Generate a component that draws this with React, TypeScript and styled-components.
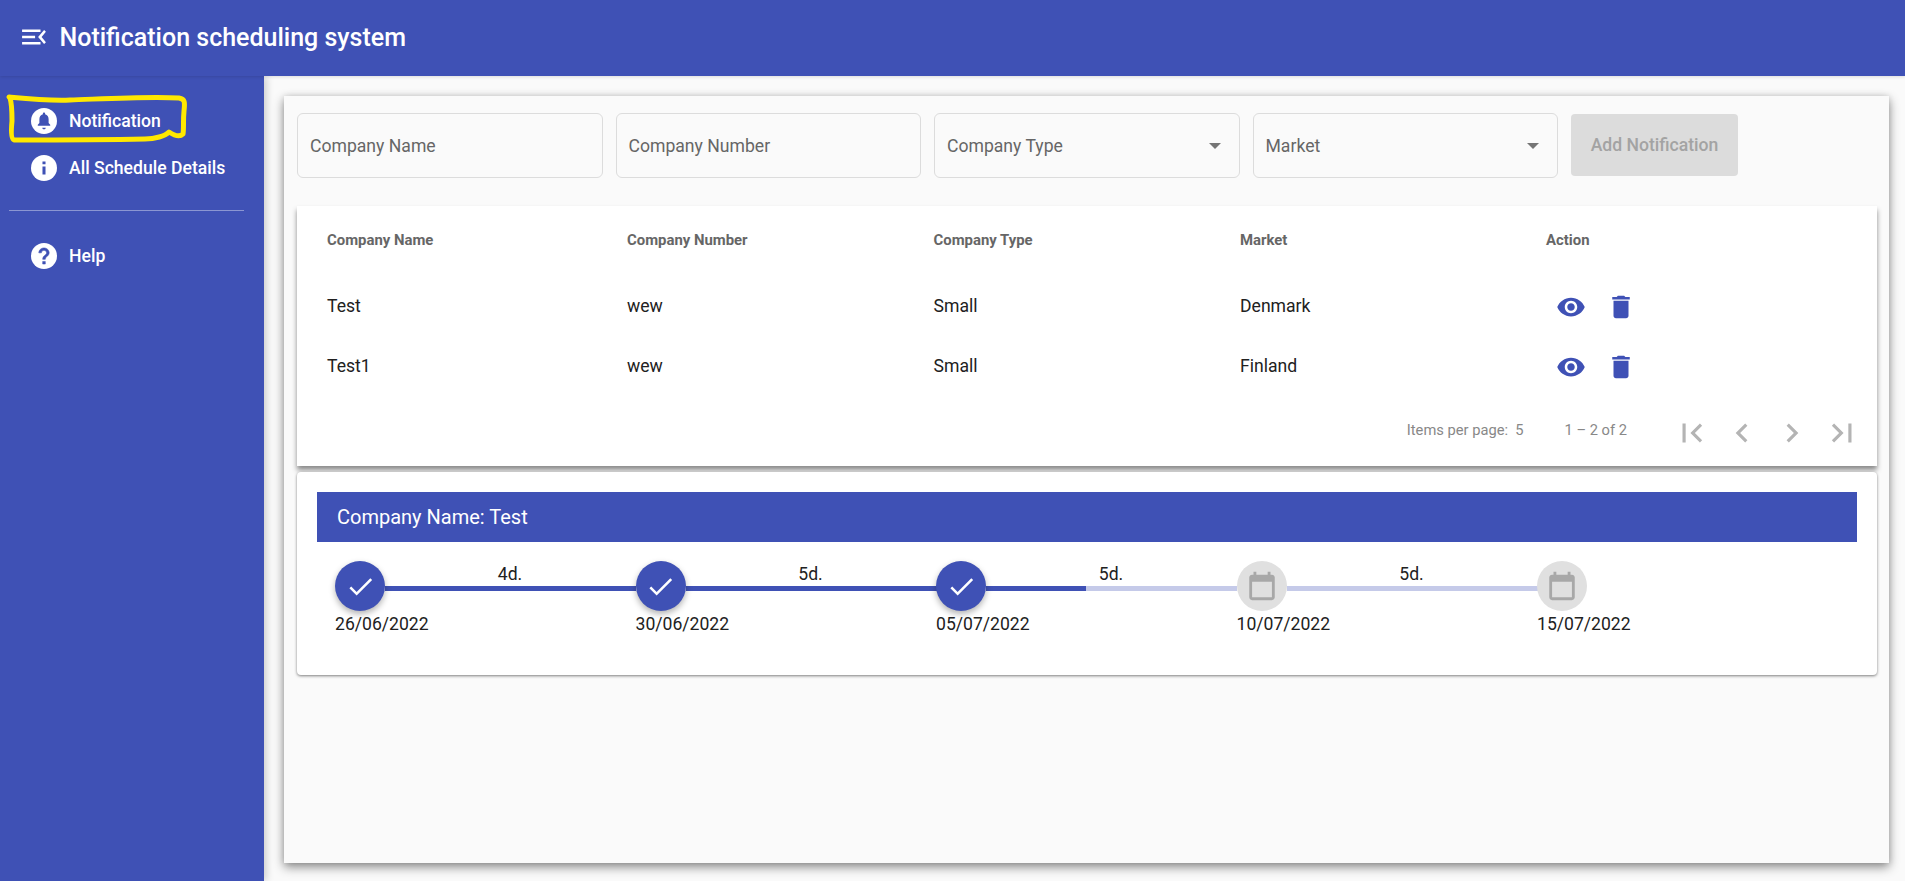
import React from "react";
import styled, { createGlobalStyle } from "styled-components";

const indigo = "#3f51b5";

const Global = createGlobalStyle`
  html, body { margin: 0; padding: 0; height: 100%; }
  body { font-family: Roboto, "Liberation Sans", sans-serif; background: #fafafa; overflow: hidden; }
  * { box-sizing: border-box; }
`;

const Page = styled.div`
  width: 1905px;
  height: 881px;
  display: flex;
  flex-direction: column;
  overflow: hidden;
`;

const Header = styled.header`
  position: relative;
  z-index: 2;
  height: 76px;
  flex: none;
  background: ${indigo};
  color: #fff;
  display: flex;
  align-items: center;
  padding: 0 0 2px 21px;
  gap: 12.500px;
  box-shadow: 0 1px 3px rgba(0, 0, 0, 0.12);
`;

const MenuIcon = styled.svg`
  width: 26px;
  height: 26px;
  fill: #fff;
  flex: none;
`;

const Title = styled.h1`
  margin: 0;
  font-size: 25px;
  font-weight: 500;
`;

const Body = styled.div`
  flex: 1;
  display: flex;
  min-height: 0;
`;

const Sidebar = styled.nav`
  position: relative;
  width: 264px;
  flex: none;
  background: ${indigo};
  padding-top: 21px;
  box-shadow: 2px 0 8px rgba(0, 0, 0, 0.2);
`;

const NavItem = styled.div`
  height: 47px;
  display: flex;
  align-items: center;
  gap: 12px;
  padding-left: 31px;
  color: #fff;
  font-size: 17.6px;
  font-weight: 500;
`;

const NavIcon = styled.svg`
  width: 26px;
  height: 26px;
  flex: none;
`;

const Divider = styled.hr`
  margin: 19px 20px 21px 9px;
  border: 0;
  height: 1px;
  background: rgba(255, 255, 255, 0.4);
`;

const Highlight = styled.svg`
  position: absolute;
  left: 0;
  top: 0;
  width: 264px;
  height: 100px;
  pointer-events: none;
`;

const Main = styled.main`
  flex: 1;
  padding: 20px 16px 18px 20px;
  min-width: 0;
`;

const Sheet = styled.section`
  height: 767px;
  background: #fafafa;
  box-shadow: 0 4px 10px rgba(0, 0, 0, 0.45), 0 0 6px rgba(0, 0, 0, 0.1);
  padding: 17px 12px 0 13px;
`;

const Filters = styled.div`
  display: flex;
  align-items: center;
  gap: 13px;
`;

const Field = styled.div`
  width: 305.5px;
  height: 65px;
  border: 1px solid #dcdcdc;
  border-radius: 6px;
  padding: 0 12px;
  display: flex;
  align-items: center;
  justify-content: space-between;
  color: #666;
  font-size: 17.6px;
`;

const Caret = styled.span`
  width: 0;
  height: 0;
  margin-right: 6px;
  border-left: 6px solid transparent;
  border-right: 6px solid transparent;
  border-top: 6px solid #757575;
`;

const AddButton = styled.button`
  width: 167px;
  height: 62px;
  margin-bottom: 2px;
  border: 0;
  border-radius: 4px;
  background: #dcdcdc;
  color: #a3a3a3;
  font: 500 17.6px Roboto, sans-serif;
`;

const TableCard = styled.div`
  margin-top: 28px;
  height: 260px;
  width: 1580px;
  background: #fff;
  box-shadow: 0 4px 5px rgba(0, 0, 0, 0.45);
  display: flex;
  flex-direction: column;
  padding-left: 30px;
`;

const Row = styled.div`
  height: 60px;
  display: grid;
  grid-template-columns: 300px 306.5px 306.5px 306px 1fr;
  align-items: center;
`;

const HeadRow = styled(Row)`
  height: 68px;
  margin-bottom: 2px;
`;

const HeadCell = styled.div`
  font-size: 14.9px;
  font-weight: 700;
  color: #666;
`;

const Cell = styled.div`
  font-size: 17.6px;
  color: #212121;
`;

const Actions = styled.div`
  display: flex;
  align-items: center;
  gap: 20px;
  padding: 2px 0 0 10px;
`;

const ActionIcon = styled.svg`
  width: 30px;
  height: 30px;
  fill: ${indigo};
`;

const Pager = styled.div`
  margin-top: 22px;
  padding-right: 16px;
  display: flex;
  align-items: center;
  justify-content: flex-end;
  height: 29px;
  color: #888;
  font-size: 14.7px;
`;

const PagerLabel = styled.span<{ $gap: number }>`
  margin-right: ${(p) => p.$gap}px;
  margin-bottom: 5px;
`;

const PagerIcons = styled.div`
  display: flex;
  gap: 12px;
`;

const PagerIcon = styled.svg`
  width: 38px;
  height: 38px;
  fill: #b4b4b4;
  flex: none;
`;

const StepperCard = styled.div`
  margin-top: 6px;
  width: 1580px;
  height: 203px;
  background: #fff;
  border-radius: 4px;
  box-shadow: 0 1px 3px rgba(0, 0, 0, 0.5);
  padding: 20px 20px 0;
`;

const CardTitle = styled.div`
  height: 50px;
  background: ${indigo};
  color: #fff;
  font-size: 20px;
  font-weight: 400;
  display: flex;
  align-items: center;
  padding-left: 20px;
`;

const Steps = styled.div`
  display: flex;
  padding: 19px 0 0 18px;
`;

const Step = styled.div`
  position: relative;
  width: 300.5px;
  flex: none;
`;

const Track = styled.div<{ $from: number; $to: number; $done: boolean }>`
  position: absolute;
  top: 25px;
  left: ${(p) => p.$from}px;
  width: ${(p) => p.$to - p.$from}px;
  height: 5px;
  background: ${(p) => (p.$done ? indigo : "#c5cae9")};
`;

const Gap = styled.div`
  position: absolute;
  top: 3px;
  left: 175px;
  transform: translateX(-50%);
  font-size: 17.6px;
  color: #212121;
`;

const Dot = styled.div<{ $done: boolean }>`
  position: relative;
  width: 50px;
  height: 50px;
  border-radius: 50%;
  background: ${(p) => (p.$done ? indigo : "#e0e0e0")};
  box-shadow: ${(p) => (p.$done ? "0 3px 6px rgba(0,0,0,0.3)" : "none")};
  display: flex;
  align-items: center;
  justify-content: center;
`;

const DotIcon = styled.svg<{ $done: boolean }>`
  width: ${(p) => (p.$done ? 31 : 34)}px;
  height: ${(p) => (p.$done ? 31 : 34)}px;
  flex: none;
  fill: ${(p) => (p.$done ? "#fff" : "#a8a8a8")};
`;

const DateText = styled.div`
  margin-top: 3px;
  font-size: 17.6px;
  line-height: 21px;
  color: #212121;
`;

const Disc = ({ children }: { children: React.ReactNode }) => (
  <NavIcon viewBox="0 0 24 24">
    <circle cx="12" cy="12" r="12" fill="#fff" />
    {children}
  </NavIcon>
);

const Eye = () => (
  <ActionIcon viewBox="0 0 24 24">
    <path d="M12 4.5C7 4.5 2.73 7.61 1 12c1.73 4.39 6 7.5 11 7.5s9.27-3.11 11-7.5c-1.73-4.39-6-7.5-11-7.5zM12 17c-2.76 0-5-2.24-5-5s2.24-5 5-5 5 2.24 5 5-2.24 5-5 5zm0-8c-1.66 0-3 1.34-3 3s1.34 3 3 3 3-1.34 3-3-1.34-3-3-3z" />
  </ActionIcon>
);

const Trash = () => (
  <ActionIcon viewBox="0 0 24 24">
    <path d="M6 19c0 1.1.9 2 2 2h8c1.1 0 2-.9 2-2V7H6v12zM19 4h-3.5l-1-1h-5l-1 1H5v2h14V4z" />
  </ActionIcon>
);

const pagerPaths = [
  "M18.41 16.59L13.82 12l4.59-4.59L17 6l-6 6 6 6zM6 6h2v12H6z",
  "M15.41 7.41L14 6l-6 6 6 6 1.41-1.41L10.83 12z",
  "M10 6L8.59 7.41 13.17 12l-4.58 4.59L10 18l6-6z",
  "M5.59 7.41L10.18 12l-4.59 4.59L7 18l6-6-6-6zM16 6h2v12h-2z",
];

const rows = [
  ["Test", "wew", "Small", "Denmark"],
  ["Test1", "wew", "Small", "Finland"],
];

const steps = [
  { date: "26/06/2022", gap: "4d.", done: true, next: true },
  { date: "30/06/2022", gap: "5d.", done: true, next: true },
  { date: "05/07/2022", gap: "5d.", done: true, next: false },
  { date: "10/07/2022", gap: "5d.", done: false, next: false },
  { date: "15/07/2022", gap: "", done: false, next: false },
];

export default function App() {
  return (
    <Page>
      <Global />
      <Header>
        <MenuIcon viewBox="0 0 24 24">
          <path d="M1 5h17v2.400H1zM1 10.800h12v2.400H1zM1 16.600h17v2.400H1zM23 7.200l-1.700-1.700L15.800 12l5.500 6.500 1.700-1.700L19 12z" />
        </MenuIcon>
        <Title>Notification scheduling system</Title>
      </Header>
      <Body>
        <Sidebar>
          <NavItem>
            <Disc>
              <g transform="translate(12 12) scale(1.15) translate(-12 -12)">
                <path
                  fill={indigo}
                  d="M12 18.700c.8 0 1.400-.6 1.400-1.300h-2.800c0 .7.6 1.300 1.400 1.300zM17 15.800v-.8l-1.300-1.300v-3.200c0-2-1-3.600-2.800-4V6c0-.5-.4-.9-.9-.9s-.9.4-.9.9v.5c-1.800.4-2.800 2-2.800 4v3.200L7 15v.8z"
                />
              </g>
            </Disc>
            Notification
          </NavItem>
          <NavItem>
            <Disc>
              <path fill={indigo} d="M10.600 10.500h2.800v7.500h-2.800zM10.600 6h2.800v2.600h-2.800z" />
            </Disc>
            All Schedule Details
          </NavItem>
          <Divider />
          <NavItem>
            <Disc>
              <path
                fill={indigo}
                stroke={indigo}
                strokeWidth="0.500"
                d="M10.800 17h2.400v2.400h-2.400zM12 4.500c-2.700 0-4.800 2-4.800 4.600h2.400c0-1.300 1.100-2.300 2.400-2.300s2.400 1 2.400 2.300c0 2.300-3.600 2.100-3.600 6h2.400c0-2.700 3.600-3 3.600-6 0-2.600-2.100-4.600-4.800-4.600z"
              />
            </Disc>
            Help
          </NavItem>
          <Highlight viewBox="0 0 264 100">
            <path
              d="M9 21 C30 23 50 25 70 24 C100 23 150 20 179 22 C185 23 185 26 184 35 C183 45 184 52 183 58 C180 61 175 60 169 56 C165 60 155 63 145 63 C100 64 50 64 14 64 C11 63 11 55 12 45 C12 35 12 28 10 22 Z"
              fill="none"
              stroke="#ffe800"
              strokeWidth="5"
              strokeLinejoin="round"
            />
          </Highlight>
        </Sidebar>
        <Main>
          <Sheet>
            <Filters>
              <Field>Company Name</Field>
              <Field>Company Number</Field>
              <Field>
                Company Type
                <Caret />
              </Field>
              <Field>
                Market
                <Caret />
              </Field>
              <AddButton>Add Notification</AddButton>
            </Filters>
            <TableCard>
              <HeadRow>
                <HeadCell>Company Name</HeadCell>
                <HeadCell>Company Number</HeadCell>
                <HeadCell>Company Type</HeadCell>
                <HeadCell>Market</HeadCell>
                <HeadCell>Action</HeadCell>
              </HeadRow>
              {rows.map((r) => (
                <Row key={r[0]}>
                  {r.map((c, i) => (
                    <Cell key={i}>{c}</Cell>
                  ))}
                  <Actions>
                    <Eye />
                    <Trash />
                  </Actions>
                </Row>
              ))}
              <Pager>
                <PagerLabel $gap={41}>Items per page:&nbsp; 5</PagerLabel>
                <PagerLabel $gap={46}>1 – 2 of 2</PagerLabel>
                <PagerIcons>
                  {pagerPaths.map((d) => (
                    <PagerIcon viewBox="0 0 24 24" key={d}>
                      <path d={d} />
                    </PagerIcon>
                  ))}
                </PagerIcons>
              </Pager>
            </TableCard>
            <StepperCard>
              <CardTitle>Company Name: Test</CardTitle>
              <Steps>
                {steps.map((s) => (
                  <Step key={s.date}>
                    {s.gap && (
                      <>
                        <Track $from={50} $to={150} $done={s.done} />
                        <Track $from={150} $to={301} $done={s.next} />
                        <Gap>{s.gap}</Gap>
                      </>
                    )}
                    <Dot $done={s.done}>
                      <DotIcon viewBox="0 0 24 24" $done={s.done}>
                        {s.done ? (
                          <path d="M9 16.170L4.830 12l-1.420 1.410L9 19 21 7l-1.410-1.410z" />
                        ) : (
                          <path d="M19 4h-1V2h-2v2H8V2H6v2H5c-1.110 0-2 .9-2 2v14c0 1.100.89 2 2 2h14c1.100 0 2-.9 2-2V6c0-1.100-.9-2-2-2zm0 16H5V9h14v11z" />
                        )}
                      </DotIcon>
                    </Dot>
                    <DateText>{s.date}</DateText>
                  </Step>
                ))}
              </Steps>
            </StepperCard>
          </Sheet>
        </Main>
      </Body>
    </Page>
  );
}
